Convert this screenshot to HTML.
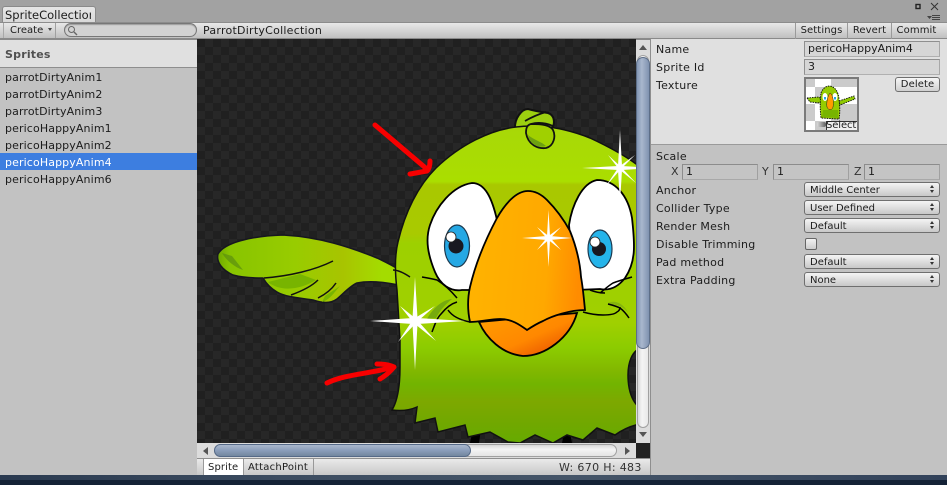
<!DOCTYPE html>
<html><head><meta charset="utf-8"><style>
html,body{margin:0;padding:0}
body{width:947px;height:485px;position:relative;overflow:hidden;background:#a2a2a2;font:11px/14px "DejaVu Sans","Liberation Sans",sans-serif;color:#1c1c1c}
div,span{box-sizing:border-box}
.a,.t{position:absolute}
.t{white-space:nowrap}
.l{letter-spacing:.25px}
.tb{position:absolute;top:23px;height:16px;border-left:1px solid #9a9a9a;text-align:center;line-height:16px}
.f{position:absolute;background:#d0d0d0;border:1px solid #8f8f8f;border-bottom-color:#b0b0b0;border-right-color:#a8a8a8;height:16px;line-height:14px;padding-left:3px;white-space:nowrap;overflow:hidden}
.f2{background:#c4c4c4;border-color:#8c8c8c #a0a0a0 #a8a8a8 #8c8c8c}
.p{position:absolute;left:804px;width:136px;height:15px;border:1px solid #6f6f6f;border-radius:3px;background:linear-gradient(#f4f4f4,#c8c8c8);padding-left:5px;line-height:15px;font-size:10px}
.p:after{content:"";position:absolute;right:5px;top:2px;width:0;height:0;border:2.5px solid transparent;border-bottom:3px solid #333;border-top:0}
.p:before{content:"";position:absolute;right:5px;top:7px;width:0;height:0;border:2.5px solid transparent;border-top:3px solid #333;border-bottom:0}
.r{position:absolute;left:5px;line-height:17px;height:17px;top:0;letter-spacing:.12px;white-space:nowrap}
</style></head><body>

<!-- title bar -->
<div class="a" style="left:0;top:0;width:947px;height:22px;background:#a2a2a2"></div>
<div class="a" style="left:2px;top:6px;width:94px;height:17px;background:linear-gradient(#e6e6e6,#d8d8d8);border:1px solid #8a8a8a;border-bottom:0;border-radius:3px 3px 0 0">
<div class="a" style="left:2px;top:0;width:86px;height:16px;overflow:hidden"><span class="t" style="left:0;top:1px;font-size:11.5px">SpriteCollection</span></div></div>
<svg class="a" style="left:910px;top:0" width="37" height="22"><rect x="6" y="4.500" width="4" height="4" fill="none" stroke="#222" stroke-width="1.400"/><path d="M21 3L28 10M28 3L21 10" stroke="#333" stroke-width="1" fill="none"/><path d="M17 16h5l-2.500 3z" fill="#444"/><path d="M22 15.500h8M22 17.500h8M22 19.500h8" stroke="#444" stroke-width="1"/></svg>

<!-- toolbar -->
<div class="a" style="left:0;top:22px;width:947px;height:18px;background:linear-gradient(#e8e8e8,#c0c0c0);border-top:1px solid #8c8c8c;border-bottom:2px solid #8a8a8a"></div>
<div class="a" style="left:3px;top:23px;width:53px;height:15px;border-left:1px solid #a8a8a8;border-right:1px solid #a0a0a0"></div>
<span class="t" style="left:10px;top:24px;font-size:10px">Create</span>
<div class="a" style="left:48px;top:28px;width:0;height:0;border:2.500px solid transparent;border-top:3px solid #444;border-bottom:0"></div>
<div class="a" style="left:64px;top:23px;width:133px;height:14px;border:1px solid #777;border-radius:7px;background:#d2d2d2;box-shadow:inset 0 1px 1px #999"></div>
<svg class="a" style="left:67px;top:25px" width="12" height="11"><circle cx="4.500" cy="4.500" r="3" fill="none" stroke="#666" stroke-width="1"/><path d="M7 7L10 10" stroke="#666" stroke-width="1.400"/></svg>
<span class="t" style="left:203px;top:24px;letter-spacing:.25px">ParrotDirtyCollection</span>
<div class="tb" style="left:795px;width:52px;font-size:10px;letter-spacing:.1px">Settings</div>
<div class="tb" style="left:847px;width:44px;font-size:10px;letter-spacing:.1px">Revert</div>
<div class="tb" style="left:891px;width:50px;font-size:10px;letter-spacing:.1px">Commit</div>

<!-- left list -->
<div class="a" style="left:0;top:40px;width:197px;height:435px;background:#c2c2c2"></div>
<div class="a" style="left:0;top:40px;width:197px;height:28px;background:#e0e0e0;border-bottom:1px solid #8e8e8e"></div>
<span class="t" style="left:5px;top:48px;font-weight:bold;color:#505050;letter-spacing:.2px">Sprites</span>
<div class="a" style="left:0;top:153px;width:197px;height:17px;background:#3d7ee0"></div>
<span class="r" style="top:69px">parrotDirtyAnim1</span>
<span class="r" style="top:86px">parrotDirtyAnim2</span>
<span class="r" style="top:103px">parrotDirtyAnim3</span>
<span class="r" style="top:120px">pericoHappyAnim1</span>
<span class="r" style="top:137px">pericoHappyAnim2</span>
<span class="r" style="top:154px;color:#fff">pericoHappyAnim4</span>
<span class="r" style="top:171px">pericoHappyAnim6</span>

<!-- canvas -->
<div class="a" style="left:197px;top:39px;width:439px;height:404px;background-color:#202020;background-image:conic-gradient(#272727 25%,transparent 0 50%,#272727 0 75%,transparent 0);background-size:16px 16px;overflow:hidden">
<svg width="439" height="404" viewBox="197 39 439 404" style="display:block">
<defs>
<linearGradient id="b" x1="0" y1="0" x2="0" y2="1">
<stop offset="0" stop-color="#a8d808"/><stop offset=".175" stop-color="#aade00"/><stop offset=".185" stop-color="#a9c800"/><stop offset=".34" stop-color="#a9ca00"/><stop offset=".37" stop-color="#9dd000"/><stop offset=".62" stop-color="#a0d000"/><stop offset=".7" stop-color="#8ccc00"/><stop offset=".77" stop-color="#82b800"/><stop offset=".815" stop-color="#72b400"/><stop offset=".87" stop-color="#7da800"/><stop offset=".93" stop-color="#72a800"/><stop offset="1" stop-color="#66aa00"/>
</linearGradient>
<linearGradient id="w" x1="0" y1="0" x2="1" y2="0"><stop offset="0" stop-color="#6fa800"/><stop offset=".06" stop-color="#88c400"/><stop offset=".4" stop-color="#98cc00"/><stop offset=".65" stop-color="#a8c400"/><stop offset=".85" stop-color="#a4dc00"/><stop offset="1" stop-color="#a4dc00"/></linearGradient>
<linearGradient id="k" x1="0" y1="0" x2="1" y2=".1"><stop offset="0" stop-color="#ffb400"/><stop offset=".72" stop-color="#ffa800"/><stop offset="1" stop-color="#ff8c00"/></linearGradient>
<linearGradient id="k2" x1="0" y1="0" x2="1" y2="1"><stop offset="0" stop-color="#ff9e00"/><stop offset=".55" stop-color="#ff8800"/><stop offset=".78" stop-color="#f06400"/><stop offset="1" stop-color="#ff8c00"/></linearGradient>
</defs>
<!-- legs behind -->
<path d="M470 443l3-14 8 0 -2 14zM562 443l2-10 6 0 2 10z" fill="#000"/>
<!-- wing silhouette -->
<path d="M218 254C224 243 250 236 283 235C320 237 350 247 377 258C392 265 404 272 411 278L408 288C395 283 372 280 357 283C350 286 344 293 337 299C330 304 322 303 313 300C300 298 285 297 277 292C270 288 266 283 263 278C250 278 240 277 233 275C222 270 216 262 218 254Z" fill="url(#w)" stroke="#17171f" stroke-width="1.500"/>
<path d="M222 253C226 260 234 267 243 270L232 256Z" fill="#5b8e10" opacity=".7"/>
<path d="M268 282C280 292 300 290 316 280L300 274ZM322 302C330 300 336 290 340 286L325 296Z" fill="#78b400"/>
<path d="M264 278C290 276 315 270 333 261M291 295C302 291 312 286 318 280M318 298C326 294 332 289 336 283" fill="none" stroke="#111" stroke-width="1.500"/>
<!-- crest back -->
<path d="M515 130C514 118 522 109 528 109C535 111 541 112 548 113C555 115 555 124 552 128L520 132Z" fill="#9ccf10" stroke="#111" stroke-width="2"/>
<!-- body -->
<path d="M397 290C394 265 396 250 398 242C405 212 418 186 436 168C460 145 490 130 516 127C540 124 565 128 590 138C605 145 625 155 640 167L640 348C632 352 628 362 628 375C628 390 632 402 640 408L640 424C630 426 622 430 615 435L597 428L583 440L567 435L553 443L535 435L520 443L508 442L490 432L468 437L465 425L438 432L435 418L415 423L417 407C408 411 400 411 392 410C398 400 400 385 400 367L400 340C399 325 398 305 397 290Z" fill="url(#b)" stroke="#111" stroke-width="1.500"/>
<path d="M410 277C404 273 398 270 393 270" fill="none" stroke="#111" stroke-width="1.500"/>
<!-- crest front -->
<path d="M531 124C527 125 526 128 526 133C528 145 538 149 546 148C554 146 556 136 553 130C550 125 542 124 531 124Z" fill="#a0d000" stroke="#111" stroke-width="1.800"/>
<path d="M528 135C530 146 540 148 546 146C542 142 534 140 528 135Z" fill="#6da010"/>
<path d="M525 121C532 117 539 114 546 112M531 124C538 122 546 123 553 126" fill="none" stroke="#111" stroke-width="1.700"/>
<!-- eyes -->
<path d="M472 183C485 183 492 198 497 220L500 290L462 290C450 292 440 284 435 272C428 255 425 240 430 225C436 207 452 186 472 183Z" fill="#fff" stroke="#000" stroke-width="1.800"/>
<path d="M597 180C615 180 628 195 632 218C635 245 636 262 625 278C618 287 610 291 600 289L575 290L569 225C572 205 582 183 597 180Z" fill="#fff" stroke="#000" stroke-width="1.800"/>
<ellipse cx="457" cy="246" rx="12.500" ry="21" fill="#25a8e4" stroke="#1c3a50" stroke-width="1.200"/>
<circle cx="456" cy="246" r="7.500" fill="#181820"/>
<circle cx="451" cy="237" r="5" fill="#fff" stroke="#222" stroke-width=".8"/>
<ellipse cx="600" cy="249" rx="12" ry="19" fill="#25b4ea" stroke="#1c3a50" stroke-width="1.200"/>
<circle cx="599" cy="249" r="7" fill="#181820"/>
<circle cx="595" cy="242" r="5" fill="#fff" stroke="#222" stroke-width=".8"/>
<!-- lower beak -->
<path d="M479 322C486 338 502 354 523 356C545 356 570 338 577 313Z" fill="url(#k2)" stroke="#000" stroke-width="1.800"/>
<!-- upper beak -->
<path d="M528 191C536 191 542 195 547 200C556 209 564 220 570 231C576 246 580 262 581 277C583 288 584 300 585 310C570 310 552 316 543 321C536 324 530 328 527 330C520 325 512 319 500 319C490 319 480 322 470 322C467 308 468 296 470 287C474 270 481 248 497 218C505 204 516 191 528 191Z" fill="url(#k)" stroke="#000" stroke-width="1.800"/>
<!-- cheek shadows -->
<path d="M427 319C433 308 442 300 452 299C446 304 440 310 436 318Z" fill="#6fa310" opacity=".85"/>
<path d="M608 303C614 300 622 302 628 312C622 306 616 304 610 305Z" fill="#7fae10" opacity=".8"/>
<!-- smile and cheeks -->
<path d="M448 310C452 316 460 320 470 322M583 312C590 314 597 315 603 315C610 315 615 314 617 312C619 311 620 309 620 307M608 304C612 305 616 306 620 308C624 311 627 315 629 318M457 302C450 304 445 309 441 314C437 318 435 324 432 332M422 277C428 278 433 279 437 280C445 285 452 292 457 298M632 277C625 279 618 281 613 283C608 286 604 290 600 293M590 290C595 292 600 293 605 293" fill="none" stroke="#000" stroke-width="1.500"/>
<!-- red arrows -->
<path d="M375 125L428 170M430 161C430 166 429 169 427 171C421 172 416 173 410 174" fill="none" stroke="#f80000" stroke-width="5" stroke-linecap="round" stroke-linejoin="round"/>
<path d="M327 383C345 374 370 374 393 367M377 364C384 364 390 365 394 367C390 372 385 376 380 379" fill="none" stroke="#f80000" stroke-width="5" stroke-linecap="round" stroke-linejoin="round"/>
<!-- sparkles -->
<g fill="#fff">
<path d="M620 130L622 166L655 168L622 170L620 203L618 170L582 168L618 166Z"/>
<path d="M608 155L620 166L635 155L622 168L636 183L620 170L606 186L618 168Z"/>
<path d="M548.500 210L550 236L572 238L550 240L548.500 267L547 240L522 238L547 236Z"/>
<path d="M537 227L548.500 236L561 227L550.500 238L561 250L548.500 240L537 250L546.500 238Z"/>
<path d="M415 277L417.500 318L465 321L417.500 324L415 370L412.500 324L370 321L412.500 318Z"/>
<path d="M400 306L415 318L435 306L418 321L436 341L415 324L398 342L412 321Z"/>
<circle cx="620" cy="168" r="3.500"/><circle cx="548.500" cy="238" r="3"/><circle cx="415" cy="321" r="4.500"/>
</g>
</svg>
</div>

<!-- vertical scrollbar -->
<div class="a" style="left:636px;top:40px;width:14px;height:403px;background:#dcdcdc"></div>
<div class="a" style="left:637px;top:55px;width:12px;height:373px;background:linear-gradient(90deg,#d8d8d8,#f4f4f4 40%,#e8e8e8);border:1px solid #a0a0a0;border-radius:6px"></div>
<div class="a" style="left:636px;top:57px;width:14px;height:292px;background:linear-gradient(90deg,#8296b4,#a9b7cd 40%,#7f92b0);border:1px solid #5d6e88;border-radius:7px"></div>
<div class="a" style="left:639px;top:45px;width:0;height:0;border:4px solid transparent;border-bottom:5px solid #555;border-top:0"></div>
<div class="a" style="left:639px;top:432px;width:0;height:0;border:4px solid transparent;border-top:5px solid #555;border-bottom:0"></div>

<!-- horizontal scrollbar -->
<div class="a" style="left:197px;top:443px;width:439px;height:15px;background:#dcdcdc"></div>
<div class="a" style="left:214px;top:444px;width:403px;height:13px;background:linear-gradient(#d8d8d8,#f4f4f4 40%,#e4e4e4);border:1px solid #a0a0a0;border-radius:7px"></div>
<div class="a" style="left:214px;top:444px;width:257px;height:13px;background:linear-gradient(#aab8cd,#8a9dba 50%,#73879f);border:1px solid #566a88;border-radius:7px"></div>
<div class="a" style="left:203px;top:447px;width:0;height:0;border:4px solid transparent;border-right:5px solid #555;border-left:0"></div>
<div class="a" style="left:625px;top:447px;width:0;height:0;border:4px solid transparent;border-left:5px solid #555;border-right:0"></div>
<div class="a" style="left:636px;top:443px;width:14px;height:15px;background:#222"></div>

<!-- status bar -->
<div class="a" style="left:197px;top:458px;width:453px;height:17px;background:linear-gradient(#eaeaea,#c8c8c8);border-top:1px solid #909090"></div>
<div class="a" style="left:203px;top:459px;width:41px;height:16px;background:#fff;border-left:1px solid #999;border-right:1px solid #999"></div>
<div class="a" style="left:244px;top:459px;width:70px;height:16px;border-right:1px solid #999"></div>
<span class="t" style="left:208px;top:461px;font-size:10px;letter-spacing:.1px">Sprite</span>
<span class="t" style="left:248px;top:461px;font-size:10px;letter-spacing:.25px">AttachPoint</span>
<span class="t" style="left:559px;top:461px;letter-spacing:.33px;color:#333">W: 670 H: 483</span>

<!-- inspector -->
<div class="a" style="left:650px;top:39px;width:297px;height:436px;background:#c2c2c2;border-left:1px solid #8e8e8e"></div>
<div class="a" style="left:651px;top:39px;width:296px;height:106px;background:#e0e0e0;border-bottom:1px solid #9a9a9a"></div>
<span class="t l" style="left:656px;top:43px">Name</span>
<span class="t l" style="left:656px;top:61px">Sprite Id</span>
<span class="t l" style="left:656px;top:79px">Texture</span>
<div class="f" style="left:804px;top:41px;width:136px;background:#d6d6d6">pericoHappyAnim4</div>
<div class="f" style="left:804px;top:59px;width:136px;background:#d6d6d6">3</div>

<!-- thumbnail -->
<div class="a" style="left:804px;top:77px;width:55px;height:55px;border:2px solid #7a7a7a;background:#fff;overflow:hidden">
<svg class="a" style="left:0;top:0" width="51" height="51" viewBox="0 0 51 51">
<g fill="#cbcbcb"><rect x="0" y="0" width="9" height="8"/><rect x="0" y="25" width="9" height="17"/><rect x="9" y="8" width="16" height="17"/><rect x="9" y="42" width="16" height="9"/><rect x="25" y="0" width="17" height="8"/><rect x="25" y="25" width="17" height="17"/><rect x="42" y="0" width="9" height="8"/><rect x="42" y="25" width="9" height="17"/></g>
<path d="M1 19L13 18L17 22L15 24L4 23Z" fill="#8fca00" stroke="#111" stroke-width=".9" stroke-dasharray="1.500 1"/>
<path d="M33 22L48 17L49 20L34 26Z" fill="#8fca00" stroke="#111" stroke-width=".9" stroke-dasharray="1.500 1"/>
<path d="M15 14C17 9 20 7 24 7C29 8 32 12 33 20C34 28 34 34 33 40L15 39C14 30 14 22 15 14Z" fill="#96cc00" stroke="#111" stroke-width="1" stroke-dasharray="1.500 1"/>
<path d="M17 31L32 31L32 39L16 38Z" fill="#78b400"/>
<ellipse cx="19" cy="18" rx="2.500" ry="4" fill="#fff"/><ellipse cx="29" cy="18" rx="2.500" ry="4" fill="#fff"/>
<rect x="18" y="18" width="2" height="2.500" fill="#25a8e4"/><rect x="28" y="18" width="2" height="2.500" fill="#25a8e4"/>
<path d="M24 14C27 15 28 24 27 28C26 32 22 31 21 28C20 24 22 16 24 14Z" fill="#ff9d00" stroke="#222" stroke-width=".5"/>
</svg>
<div class="a" style="left:11px;top:43px;width:9px;height:5px;background:linear-gradient(90deg,#ddd,#444);border-radius:2px;opacity:.8"></div>
<div class="a" style="left:20px;top:42px;width:31px;height:9px;background:#f0f0f0;border-top:1px solid #333;border-left:1px solid #333"></div>
<span class="t" style="left:20px;top:41px;font-size:10px;line-height:11px;letter-spacing:-.1px">Select</span>
</div>

<div class="a" style="left:895px;top:77px;width:45px;height:15px;border:1px solid #6f6f6f;border-radius:3px;background:linear-gradient(#f6f6f6,#cfcfcf);text-align:center;font-size:10px;letter-spacing:.1px;line-height:14px">Delete</div>

<span class="t l" style="left:656px;top:150px">Scale</span>
<span class="t" style="left:671px;top:165px;color:#333">X</span>
<span class="t" style="left:762px;top:165px;color:#333">Y</span>
<span class="t" style="left:854px;top:165px;color:#333">Z</span>
<div class="f f2" style="left:682px;top:164px;width:76px">1</div>
<div class="f f2" style="left:773px;top:164px;width:76px">1</div>
<div class="f f2" style="left:864px;top:164px;width:76px">1</div>

<span class="t l" style="left:656px;top:184px">Anchor</span>
<span class="t l" style="left:656px;top:202px">Collider Type</span>
<span class="t l" style="left:656px;top:220px">Render Mesh</span>
<span class="t l" style="left:656px;top:238px">Disable Trimming</span>
<span class="t l" style="left:656px;top:256px">Pad method</span>
<span class="t l" style="left:656px;top:274px">Extra Padding</span>

<div class="p" style="top:182px">Middle Center</div>
<div class="p" style="top:200px">User Defined</div>
<div class="p" style="top:218px">Default</div>
<div class="a" style="left:805px;top:238px;width:12px;height:12px;border:1px solid #666;border-radius:2px;background:linear-gradient(#f2f2f2,#cdcdcd)"></div>
<div class="p" style="top:254px">Default</div>
<div class="p" style="top:272px">None</div>

<!-- bottom taskbar strip -->
<div class="a" style="left:0;top:475px;width:947px;height:5px;background:linear-gradient(90deg,#2a3a50,#3c4c60 30%,#455568 60%,#32425a)"></div>
<div class="a" style="left:0;top:480px;width:947px;height:5px;background:#142236"></div>
</body></html>
